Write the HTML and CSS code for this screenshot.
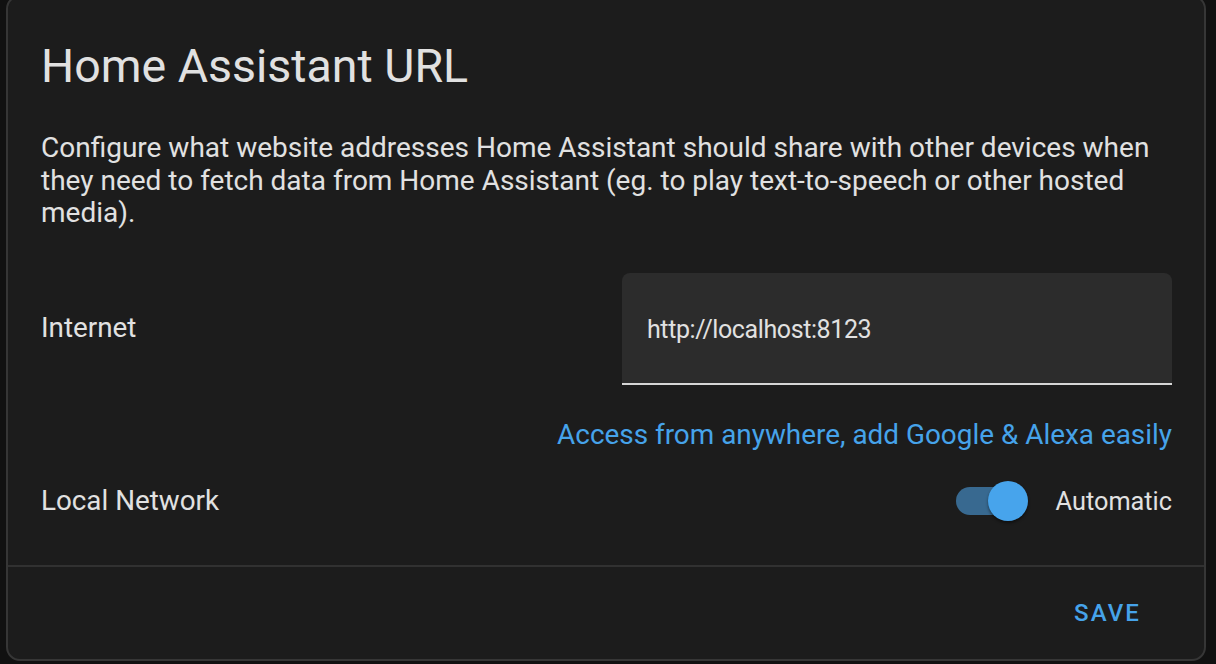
FILE: index.html
```html
<!DOCTYPE html>
<html lang="en">
<head>
    <meta charset="UTF-8">
    <meta name="viewport" content="width=device-width, initial-scale=1.0">
    <title>Home Assistant URL</title>

    <link rel="stylesheet" href="styles.css">

</head>
<body>
    <main class="card">
        <div class="card-content">
            <h1 class="card-title">Home Assistant URL</h1>
            <p class="description">
                Configure what website addresses Home Assistant should share with other devices when
                they need to fetch data from Home Assistant (eg. to play text-to-speech or other hosted
                media).
            </p>

            <div class="row">
                <span class="row-label">Internet</span>
                <div class="textfield">
                    <input type="text" id="external_url" value="http://localhost:8123">
                </div>
            </div>

            <div class="link-row">
                <a href="#" class="cloud-link">Access from anywhere, add Google &amp; Alexa easily</a>
            </div>

            <div class="row row-local">
                <span class="row-label">Local Network</span>
                <div class="toggle">
                    <label class="switch" for="internal_auto">
                        <input type="checkbox" id="internal_auto" checked>
                        <span class="switch-track"></span>
                        <span class="switch-thumb"></span>
                    </label>
                    <span class="toggle-label">Automatic</span>
                </div>
            </div>
        </div>

        <div class="card-actions">
            <button class="btn-save">Save</button>
        </div>
    </main>
</body>
</html>
```

FILE: styles.css
```css
body {
    margin: 0;
    background: #111111;
    font-family: Roboto, "Noto Sans", sans-serif;
    color: #e1e1e1;
}

.card {
    margin: -5px 10px 0 6px;
    background: #1c1c1c;
    border: 2px solid #363636;
    border-radius: 14px;
}
.card-content {
    padding: 42px 32px 44px 33px;
}

.card-title {
    margin: 0;
    font-size: 46.5px;
    font-weight: 400;
    line-height: normal;
}
.description {
    margin: 39px 0 0;
    font-size: 28px;
    line-height: 32.5px;
}

.row {
    display: flex;
    align-items: center;
    justify-content: space-between;
    margin-top: 43px;
}
.row-label {
    font-size: 27.8px;
    line-height: 32.5px;
}
.row-local {
    margin-top: 30px;
    height: 40px;
}

.textfield {
    width: 550px;
    height: 112px;
    box-sizing: border-box;
    display: flex;
    align-items: center;
    padding: 4px 25px 0;
    background: #2c2c2c;
    border-radius: 8px 8px 0 0;
    border-bottom: 2px solid #d6d6d6;
}
.textfield input {
    width: 100%;
    border: none;
    outline: none;
    background: transparent;
    color: #e1e1e1;
    font-family: inherit;
    font-size: 25px;
    letter-spacing: -0.4px;
    padding: 0;
}

.link-row {
    display: flex;
    justify-content: flex-end;
    margin-top: 34px;
    line-height: 32.5px;
}
.cloud-link {
    color: #46a3ea;
    text-decoration: none;
    font-size: 27.9px;
}

.toggle {
    display: flex;
    align-items: center;
}
.switch {
    position: relative;
    width: 72px;
    height: 40px;
}
.switch input {
    display: none;
}
.switch-track {
    position: absolute;
    left: 0;
    top: 6px;
    width: 66px;
    height: 28px;
    border-radius: 14px;
    background: #386990;
}
.switch-thumb {
    position: absolute;
    right: 0;
    top: 0;
    width: 40px;
    height: 40px;
    border-radius: 50%;
    background: #47a4ec;
    box-shadow: 0 2px 3px rgba(0, 0, 0, 0.45);
}
.toggle-label {
    margin-left: 28px;
    font-size: 25.3px;
}

.card-actions {
    display: flex;
    align-items: center;
    justify-content: flex-end;
    height: 92px;
    padding: 0 32px;
    border-top: 2px solid #313131;
}
.btn-save {
    padding: 12px 31px;
    border: none;
    background: transparent;
    color: #46a3ea;
    font-family: inherit;
    font-size: 24px;
    font-weight: 500;
    letter-spacing: 2.1px;
    text-transform: uppercase;
}
```
